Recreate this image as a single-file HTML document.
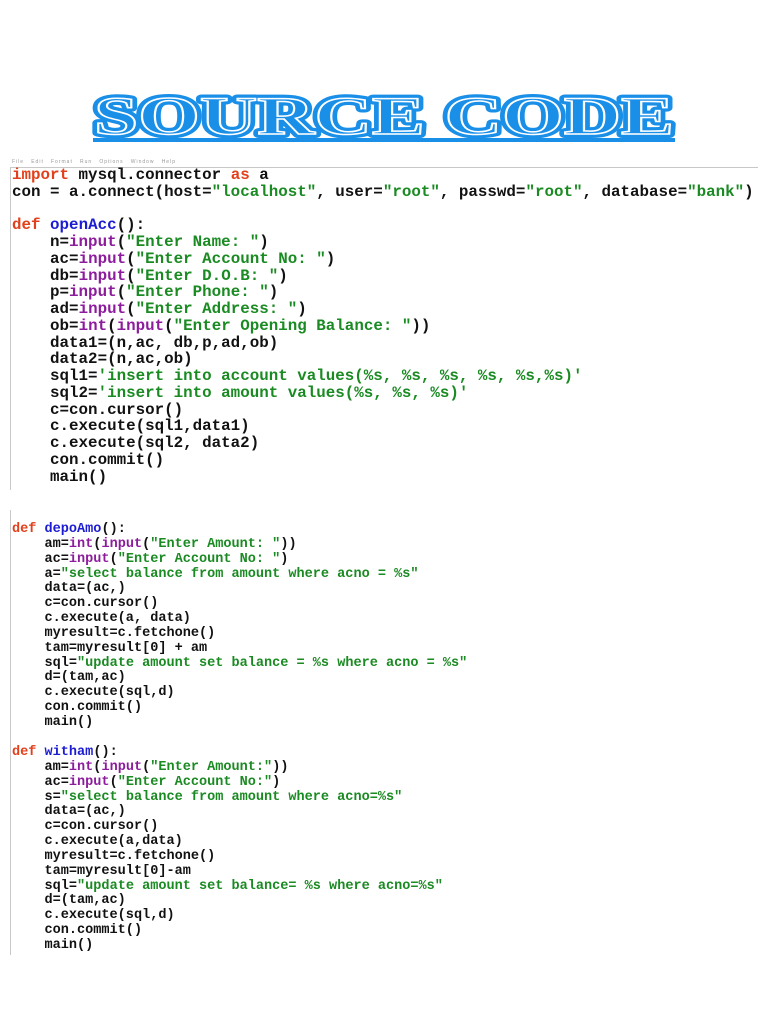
<!DOCTYPE html>
<html><head><meta charset="utf-8"><style>
body{margin:0;width:768px;height:1024px;background:#fff;position:relative;overflow:hidden}
pre{position:absolute;margin:0;font-family:"Liberation Mono",monospace;font-weight:bold;color:#111}
.k{color:#e2401c}.f{color:#1c1cd2}.s{color:#1a8a22}.b{color:#8c1c9c}
#p1{left:12px;top:167px;font-size:15.85px;line-height:16.75px}
#p2{left:12px;top:523px;font-size:13.55px;line-height:14.85px}
#p3{left:12px;top:746px;font-size:13.55px;line-height:14.85px}
.ln{position:absolute;background:#c8c8c8}
</style></head><body>
<svg width="768" height="150" style="position:absolute;left:0;top:0">
<text x="94" y="134" textLength="580" lengthAdjust="spacingAndGlyphs" font-family="Liberation Serif" font-weight="bold" font-size="54" fill="#1a8fe8" stroke="#1a8fe8" stroke-width="8" stroke-linejoin="round">SOURCE CODE</text>
<text x="94" y="134" textLength="580" lengthAdjust="spacingAndGlyphs" font-family="Liberation Serif" font-weight="bold" font-size="54" fill="#1a8fe8" stroke="#fff" stroke-width="1.5">SOURCE CODE</text>
<rect x="93" y="138" width="582" height="4" fill="#1a8fe8"/>
</svg>
<div style="position:absolute;left:12px;top:159px;font:5px 'Liberation Sans',sans-serif;color:#999;letter-spacing:1px">File&nbsp;&nbsp; Edit&nbsp;&nbsp; Format&nbsp;&nbsp; Run&nbsp;&nbsp; Options&nbsp;&nbsp; Window&nbsp;&nbsp; Help</div>
<div class="ln" style="left:10px;top:167px;width:748px;height:1px"></div>
<div class="ln" style="left:10px;top:167px;width:1px;height:323px"></div>
<div class="ln" style="left:10px;top:510px;width:1px;height:445px"></div>
<pre id="p1"><span class="k">import</span> mysql.connector <span class="k">as</span> a
con = a.connect(host=<span class="s">"localhost"</span>, user=<span class="s">"root"</span>, passwd=<span class="s">"root"</span>, database=<span class="s">"bank"</span>)

<span class="k">def</span> <span class="f">openAcc</span>():
    n=<span class="b">input</span>(<span class="s">"Enter Name: "</span>)
    ac=<span class="b">input</span>(<span class="s">"Enter Account No: "</span>)
    db=<span class="b">input</span>(<span class="s">"Enter D.O.B: "</span>)
    p=<span class="b">input</span>(<span class="s">"Enter Phone: "</span>)
    ad=<span class="b">input</span>(<span class="s">"Enter Address: "</span>)
    ob=<span class="b">int</span>(<span class="b">input</span>(<span class="s">"Enter Opening Balance: "</span>))
    data1=(n,ac, db,p,ad,ob)
    data2=(n,ac,ob)
    sql1=<span class="s">'insert into account values(%s, %s, %s, %s, %s,%s)'</span>
    sql2=<span class="s">'insert into amount values(%s, %s, %s)'</span>
    c=con.cursor()
    c.execute(sql1,data1)
    c.execute(sql2, data2)
    con.commit()
    main()</pre>
<pre id="p2"><span class="k">def</span> <span class="f">depoAmo</span>():
    am=<span class="b">int</span>(<span class="b">input</span>(<span class="s">"Enter Amount: "</span>))
    ac=<span class="b">input</span>(<span class="s">"Enter Account No: "</span>)
    a=<span class="s">"select balance from amount where acno = %s"</span>
    data=(ac,)
    c=con.cursor()
    c.execute(a, data)
    myresult=c.fetchone()
    tam=myresult[0] + am
    sql=<span class="s">"update amount set balance = %s where acno = %s"</span>
    d=(tam,ac)
    c.execute(sql,d)
    con.commit()
    main()</pre>
<pre id="p3"><span class="k">def</span> <span class="f">witham</span>():
    am=<span class="b">int</span>(<span class="b">input</span>(<span class="s">"Enter Amount:"</span>))
    ac=<span class="b">input</span>(<span class="s">"Enter Account No:"</span>)
    s=<span class="s">"select balance from amount where acno=%s"</span>
    data=(ac,)
    c=con.cursor()
    c.execute(a,data)
    myresult=c.fetchone()
    tam=myresult[0]-am
    sql=<span class="s">"update amount set balance= %s where acno=%s"</span>
    d=(tam,ac)
    c.execute(sql,d)
    con.commit()
    main()</pre>
</body></html>
